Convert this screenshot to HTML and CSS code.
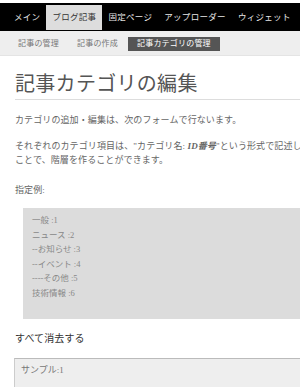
FILE: index.html
```html
<!DOCTYPE html>
<html lang="ja">
<head>
    <meta charset="UTF-8">
    <meta name="viewport" content="width=device-width, initial-scale=1.0">
    <title>記事カテゴリの編集</title>
    <link rel="stylesheet" href="styles.css">
</head>
<body>
    <div class="menu">
        <a class="menu-item">メイン</a>
        <a class="menu-item active">ブログ記事</a>
        <a class="menu-item">固定ページ</a>
        <a class="menu-item">アップローダー</a>
        <a class="menu-item">ウィジェット</a>
    </div>
    <div class="submenu">
        <a class="submenu-item">記事の管理</a>
        <a class="submenu-item">記事の作成</a>
        <a class="submenu-item active">記事カテゴリの管理</a>
    </div>

    <div class="content">
        <h1>記事カテゴリの編集</h1>
        <p class="first">カテゴリの追加・編集は、次のフォームで行ないます。</p>
        <p class="nowrap">それぞれのカテゴリ項目は、"カテゴリ名: <em>ID番号</em>"という形式で記述し、先頭に「-」を付ける<br>ことで、階層を作ることができます。</p>
        <p class="label">指定例:</p>
        <pre class="example">一般 :1
ニュース :2
--お知らせ :3
--イベント :4
----その他 :5
技術情報 :6</pre>
        <p class="clear">すべて消去する</p>
        <textarea class="categories" rows="3">サンプル:1</textarea>
    </div>
</body>
</html>
```

FILE: styles.css
```css
html {
    overflow: hidden;
}

body {
    margin: 0;
    padding-top: 3px;
    font-family: "Liberation Serif", "Noto Sans CJK JP", serif;
    color: #666;
    background: #fff;
    width: 380px;
}

.menu {
    display: flex;
    background: #000;
    padding: 2px 8px 1px;
}

.menu-item {
    padding: 0 6px;
    line-height: 25px;
    font-size: 8.5px;
    letter-spacing: 0.3px;
    color: #e8e8e8;
}

.menu-item.active {
    background: #ddd;
    color: #333;
}

.submenu {
    display: flex;
    background: #eee;
    padding: 6px 9px 4px;
    border-bottom: 1px solid #e4e4e4;
}

.submenu-item {
    padding: 0 9px;
    line-height: 14px;
    font-size: 8px;
    letter-spacing: 0.2px;
    color: #777;
}

.submenu-item.active {
    margin-left: 1px;
    background: #555;
    color: #fff;
}

.content {
    padding: 0 15px;
}

h1 {
    margin: 14px 0 0;
    padding-bottom: 1px;
    font-size: 20px;
    line-height: 28px;
    font-weight: normal;
    letter-spacing: 0.3px;
    color: #555;
    border-bottom: 1px solid #ddd;
}

p {
    margin: 11px 0 0;
    font-size: 9px;
    line-height: 14.5px;
    letter-spacing: 0.1px;
}

p.first {
    margin-top: 13px;
}

p.nowrap {
    white-space: nowrap;
}

p.label {
    margin-top: 15px;
}

em {
    font-style: italic;
    font-weight: bold;
}

.example {
    margin: 11px 0 0 8px;
    padding: 5px 9px 19px;
    background: #dcdcdc;
    font-family: "Liberation Serif", "Noto Sans CJK JP", serif;
    font-size: 8.5px;
    line-height: 14.5px;
    color: #888;
}

p.clear {
    margin-top: 13px;
    font-size: 10px;
    color: #333;
}

.categories {
    display: block;
    box-sizing: border-box;
    width: 340px;
    margin: 11px 0 0 -1px;
    padding: 4px 6px;
    border: 1px solid #ccc;
    border-top-color: #bbb;
    background: #eee;
    font-family: "Liberation Serif", "Noto Sans CJK JP", serif;
    font-size: 9px;
    line-height: 14.5px;
    color: #777;
    resize: none;
}
```
